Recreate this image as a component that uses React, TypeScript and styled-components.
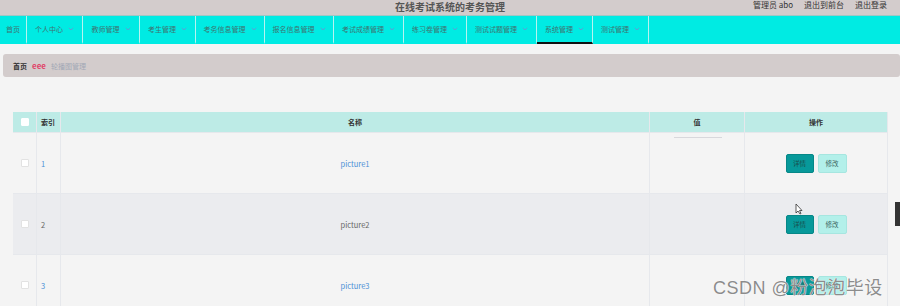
import React from "react";
import styled, { createGlobalStyle } from "styled-components";

const GlobalStyle = createGlobalStyle`
  html, body {
    margin: 0;
    padding: 0;
    background: #f4f4f4;
    font-family: "Noto Sans CJK SC", "Noto Sans", sans-serif;
    overflow: hidden;
  }
`;

const Page = styled.div`
  width: 900px;
  height: 306px;
  position: relative;
  overflow: hidden;
`;

const TopBar = styled.div`
  height: 16px;
  background: #d3cccc;
  display: flex;
  align-items: flex-start;
  justify-content: center;
  position: relative;
  border-bottom: 1px solid #9fc7c4;
  box-sizing: border-box;
`;

const Title = styled.div`
  font-size: 10px;
  line-height: 13px;
  font-weight: bold;
  color: #555;
`;

const TopLinks = styled.div`
  position: absolute;
  right: 13px;
  top: 0;
  display: flex;
  gap: 11px;
  font-size: 8px;
  line-height: 10px;
  color: #333;
`;

const NavBar = styled.div`
  height: 28px;
  background: #00ebe3;
  display: flex;
`;

const NavItem = styled.div<{ $w: number; $active?: boolean }>`
  width: ${(p) => p.$w}px;
  flex: none;
  display: flex;
  align-items: center;
  justify-content: center;
  gap: 5px;
  font-size: 7px;
  color: #3f7471;
  border-right: 1px solid #b6f3f0;
  box-sizing: border-box;
  border-bottom: 2px solid ${(p) => (p.$active ? "#111" : "transparent")};
`;

const ChevronSvg = styled.svg`
  flex: none;
  display: block;
`;

const Chevron = () => (
  <ChevronSvg width="6" height="4" viewBox="0 0 6 4">
    <path d="M0.8 0.8 L3 3 L5.2 0.8" fill="none" stroke="#5b9fd6" strokeWidth="1" />
  </ChevronSvg>
);

const Crumb = styled.div`
  margin: 10px 0 0 3px;
  height: 23px;
  background: #d3cccc;
  border-radius: 3px;
  display: flex;
  align-items: center;
  padding-left: 10px;
  gap: 5px;
  font-size: 7px;
`;

const CrumbHome = styled.span`
  font-weight: bold;
  color: #333;
`;

const CrumbMid = styled.span`
  color: #e0456a;
  font-size: 8px;
  font-weight: bold;
`;

const CrumbLast = styled.span`
  color: #a2a8b6;
`;

const Table = styled.div`
  margin: 35px 0 0 13px;
  width: 875px;
`;

const Row = styled.div<{ $head?: boolean; $alt?: boolean }>`
  display: grid;
  grid-template-columns: 24px 24px 589px 95px 143px;
  height: ${(p) => (p.$head ? 21 : 61)}px;
  background: ${(p) => (p.$head ? "#bdebe6" : p.$alt ? "#ebecef" : "#f4f4f4")};
  border-bottom: 1px solid #e6e8ec;
  box-sizing: border-box;
`;

const Cell = styled.div<{ $center?: boolean; $head?: boolean; $blue?: boolean }>`
  display: flex;
  align-items: center;
  justify-content: ${(p) => (p.$center ? "center" : "flex-start")};
  padding-left: ${(p) => (p.$center ? 0 : 4)}px;
  border-right: 1px solid #e6e8ec;
  font-size: ${(p) => (p.$head ? 7 : 7.5)}px;
  font-weight: ${(p) => (p.$head ? "bold" : "normal")};
  color: ${(p) => (p.$head ? "#333" : p.$blue ? "#4a8fd6" : "#666")};
  position: relative;
  gap: 4px;
`;

const Check = styled.span<{ $head?: boolean }>`
  width: 6px;
  height: 6px;
  background: #fff;
  border: 1px solid ${(p) => (p.$head ? "#fff" : "#e2e2e2")};
  border-radius: 1px;
`;

const Btn = styled.span<{ $dark?: boolean }>`
  width: ${(p) => (p.$dark ? 28 : 29)}px;
  height: 19px;
  display: flex;
  align-items: center;
  justify-content: center;
  border-radius: 2px;
  font-size: 6.5px;
  background: ${(p) => (p.$dark ? "#07999a" : "#b3f0ea")};
  color: ${(p) => (p.$dark ? "#184f4d" : "#3b6663")};
  border: 1px solid ${(p) => (p.$dark ? "#068787" : "#a6e6e0")};
  box-sizing: border-box;
`;

const ImgLine = styled.div`
  position: absolute;
  top: 4px;
  left: 24px;
  width: 48px;
  border-top: 1px solid #d8d8dc;
`;

const SideTab = styled.div`
  position: absolute;
  right: 0;
  top: 202px;
  width: 5px;
  height: 24px;
  background: #333;
`;

const Cursor = styled.svg`
  position: absolute;
  left: 795px;
  top: 203px;
`;

const Watermark = styled.div`
  position: absolute;
  left: 713px;
  top: 273px;
  font-size: 18px;
  letter-spacing: 0.5px;
  font-family: "Liberation Sans", "Noto Sans CJK SC", sans-serif;
  color: #8c8c8c;
  text-shadow: 0 0 1px #fff, 0 0 1px #fff;
`;

const navs = [
  { name: "首页", w: 27, arrow: false },
  { name: "个人中心", w: 56 },
  { name: "教师管理", w: 57 },
  { name: "考生管理", w: 56 },
  { name: "考务信息管理", w: 69 },
  { name: "报名信息管理", w: 69 },
  { name: "考试成绩管理", w: 70 },
  { name: "练习卷管理", w: 63 },
  { name: "测试试题管理", w: 70 },
  { name: "系统管理", w: 56, active: true },
  { name: "测试管理", w: 56 },
];

const rows = [
  { idx: "1", name: "picture1", blue: true },
  { idx: "2", name: "picture2", blue: false },
  { idx: "3", name: "picture3", blue: true },
];

export default function App() {
  return (
    <Page>
      <GlobalStyle />
      <TopBar>
        <Title>在线考试系统的考务管理</Title>
        <TopLinks>
          <span>管理员 abo</span>
          <span>退出到前台</span>
          <span>退出登录</span>
        </TopLinks>
      </TopBar>
      <NavBar>
        {navs.map((n) => (
          <NavItem key={n.name} $w={n.w} $active={n.active}>
            {n.name}
            {n.arrow !== false && <Chevron />}
          </NavItem>
        ))}
      </NavBar>
      <Crumb>
        <CrumbHome>首页</CrumbHome>
        <CrumbMid>eee</CrumbMid>
        <CrumbLast>轮播图管理</CrumbLast>
      </Crumb>
      <Table>
        <Row $head>
          <Cell $center $head>
            <Check $head />
          </Cell>
          <Cell $head>索引</Cell>
          <Cell $center $head>名称</Cell>
          <Cell $center $head>值</Cell>
          <Cell $center $head>操作</Cell>
        </Row>
        {rows.map((r, i) => (
          <Row key={r.idx} $alt={i === 1}>
            <Cell $center>
              <Check />
            </Cell>
            <Cell $blue={r.blue}>{r.idx}</Cell>
            <Cell $center $blue={r.blue}>{r.name}</Cell>
            <Cell $center>{i === 0 && <ImgLine />}</Cell>
            <Cell $center>
              <Btn $dark>详情</Btn>
              <Btn>修改</Btn>
            </Cell>
          </Row>
        ))}
      </Table>
      <SideTab />
      <Cursor width="8" height="12" viewBox="0 0 8 12">
        <path d="M1 1 L1 10 L3 8 L5 11 L6 10.5 L4.5 7.5 L7 7.5 Z" fill="#fff" stroke="#333" strokeWidth="0.8" />
      </Cursor>
      <Watermark>CSDN @粉泡泡毕设</Watermark>
    </Page>
  );
}
